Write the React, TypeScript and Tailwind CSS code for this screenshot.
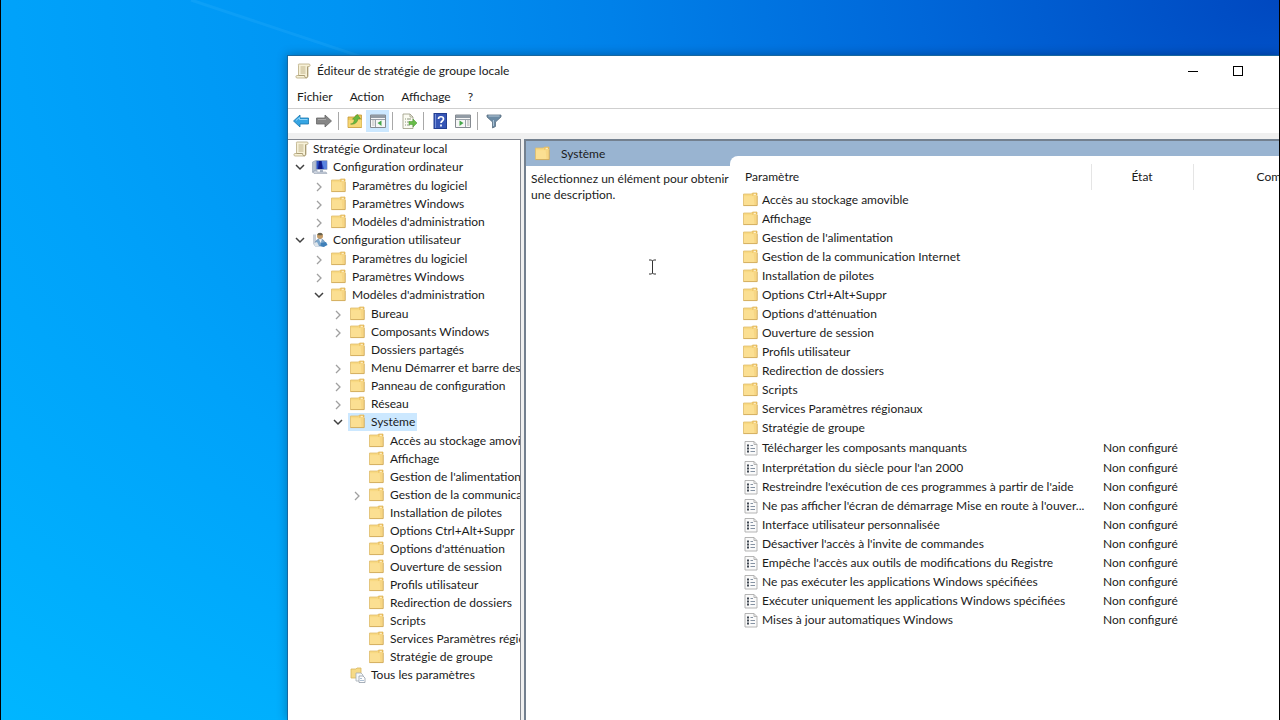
import type { ReactNode } from "react";

type TreeNode = {
  label: string;
  icon?: "computer" | "user" | "all";
  open?: boolean;
  closed?: boolean;
  selected?: boolean;
  children?: TreeNode[];
};

const systemFolders = [
  "Accès au stockage amovible",
  "Affichage",
  "Gestion de l'alimentation",
  "Gestion de la communication Internet",
  "Installation de pilotes",
  "Options Ctrl+Alt+Suppr",
  "Options d'atténuation",
  "Ouverture de session",
  "Profils utilisateur",
  "Redirection de dossiers",
  "Scripts",
  "Services Paramètres régionaux",
  "Stratégie de groupe",
];

const settings = [
  "Télécharger les composants manquants",
  "Interprétation du siècle pour l'an 2000",
  "Restreindre l'exécution de ces programmes à partir de l'aide",
  "Ne pas afficher l'écran de démarrage Mise en route à l'ouver...",
  "Interface utilisateur personnalisée",
  "Désactiver l'accès à l'invite de commandes",
  "Empêche l'accès aux outils de modifications du Registre",
  "Ne pas exécuter les applications Windows spécifiées",
  "Exécuter uniquement les applications Windows spécifiées",
  "Mises à jour automatiques Windows",
];

const tree: TreeNode[] = [
  {
    label: "Configuration ordinateur",
    icon: "computer",
    open: true,
    children: [
      { label: "Paramètres du logiciel", closed: true },
      { label: "Paramètres Windows", closed: true },
      { label: "Modèles d'administration", closed: true },
    ],
  },
  {
    label: "Configuration utilisateur",
    icon: "user",
    open: true,
    children: [
      { label: "Paramètres du logiciel", closed: true },
      { label: "Paramètres Windows", closed: true },
      {
        label: "Modèles d'administration",
        open: true,
        children: [
          { label: "Bureau", closed: true },
          { label: "Composants Windows", closed: true },
          { label: "Dossiers partagés" },
          { label: "Menu Démarrer et barre des tâches", closed: true },
          { label: "Panneau de configuration", closed: true },
          { label: "Réseau", closed: true },
          {
            label: "Système",
            open: true,
            selected: true,
            children: systemFolders.map((label) => ({
              label,
              closed: label.includes("Internet"),
            })),
          },
          { label: "Tous les paramètres", icon: "all" },
        ],
      },
    ],
  },
];

function Icon({ children }: { children: ReactNode }) {
  return (
    <svg viewBox="0 0 16 16" className="h-4 w-4 shrink-0" fill="none" aria-hidden="true">
      {children}
    </svg>
  );
}

function FolderIcon() {
  return (
    <Icon>
      <path d="M.5 2h8l1-1H14v12.500H.5z" fill="#f8d982" stroke="#dfbd6c" strokeWidth=".8" />
      <path d="M9.500 1.200H14v2.600H9.500z" fill="#e5b755" />
      <path d="M10.500 1.800h2.400v1.100h-2.400z" fill="#fff3cf" />
      <path d="M1 4.200h8.500l1-1h3.200V13H1z" fill="#fbdf92" />
      <path d="M10.500 3.500h3.200V13h-2.200z" fill="#f7d684" />
      <path d="M.5 13.600h13.700V4" stroke="#cfa95a" strokeWidth=".8" />
    </Icon>
  );
}

function ScrollIcon() {
  return (
    <Icon>
      <path d="M4 1h10c1.500 0 1.500 2.500 0 2.500h-1V13c0 1.500-1 2-2 2H2c-1.500 0-1.500-2.500 0-2.500h1.500V3C3.500 2 3 1 4 1z" fill="#f7f1d7" stroke="#b9ab82" strokeWidth=".8" />
      <path d="M12.500 3.500V13c0 1-.5 1.800-1.500 1.800S9.600 13.500 9.600 12.500H3.500" stroke="#a2946c" strokeWidth=".9" />
      <path d="M5.500 4h5M5.500 6h5M5.500 8h5M5.500 10h5" stroke="#b4a678" strokeWidth=".8" />
    </Icon>
  );
}

function ComputerIcon() {
  return (
    <Icon>
      <path d="M.5 3l3-1.500v10l-3 2z" fill="#b5c0ce" stroke="#8593a6" strokeWidth=".5" />
      <path d="M4 1.500h11v9H4z" fill="#2a50c4" stroke="#a7b3c9" />
      <path d="M9.500 2h5v8H12z" fill="#5a84e0" />
      <path d="M7 2h2.500l1 8H6z" fill="#101a86" />
      <path d="M8 11h3v2H8z" fill="#a7b3c4" />
      <path d="M1 12.500l4-1.500v2h9l1 1.500H2z" fill="#cbd3df" stroke="#8793a5" strokeWidth=".5" />
    </Icon>
  );
}

function UserIcon() {
  return (
    <Icon>
      <path d="M1 2.500h3v10H1z" fill="#c7ced8" />
      <circle cx="8" cy="4" r="3" fill="#c69c66" />
      <path d="M5.300 3c.5-3 5-3 5.400 0-2 .3-3 .2-5.400 0z" fill="#66614e" />
      <path d="M3 14c-.5-5 2-7 5-7s5 2 5 5v2z" fill="#7da7cb" stroke="#5b82a8" strokeWidth=".6" />
      <path d="M7 7l1.500 4L10 7.200z" fill="#f3f5f7" />
      <path d="M9 11l5-1 1.500 3-4 2-3-1z" fill="#3f80b9" />
      <path d="M2 11l3-1 2 4H3z" fill="#dfe5ea" />
    </Icon>
  );
}

function AllSettingsIcon() {
  return (
    <Icon>
      <path d="M1 2h5l1-1h4v10H1z" fill="#f6da88" stroke="#d9b65e" strokeWidth=".8" />
      <path d="M6 6h5l2 2v6H6z" fill="#f6f8fa" stroke="#a5adb5" strokeWidth=".8" />
      <path d="M9 9h4l2 2v4.500H9z" fill="#fff" stroke="#929ca8" strokeWidth=".8" />
      <path d="M10.500 11.500h1M10.500 13.500h1M12.500 13.500h1" stroke="#5d83ab" />
    </Icon>
  );
}

function SettingIcon() {
  return (
    <Icon>
      <path d="M2 1.500h9L14 4.500v10.500H2z" fill="#fafafa" stroke="#adadad" strokeWidth=".9" />
      <path d="M11 1.500v3h3" stroke="#adadad" strokeWidth=".9" />
      <path d="M4 4.500h2v2H4zM4 7.500h2v2H4zM4 10.500h2v2H4z" fill="#3f4650" />
      <path d="M7.500 5.500H10M7.500 8.500H12M7.500 11.500H12" stroke="#8693a3" />
    </Icon>
  );
}

function Chevron({ open }: { open?: boolean }) {
  return (
    <svg viewBox="0 0 14 14" className="h-[14px] w-[14px]" fill="none" aria-hidden="true">
      {open ? (
        <path d="M3 5l4 4 4-4" stroke="#404040" strokeWidth="1.5" />
      ) : (
        <path d="M5 4l4 4-4 4" stroke="#a0a0a0" strokeWidth="1.3" />
      )}
    </svg>
  );
}

function NodeIcon({ icon }: { icon?: TreeNode["icon"] }) {
  if (icon === "computer") return <ComputerIcon />;
  if (icon === "user") return <UserIcon />;
  if (icon === "all") return <AllSettingsIcon />;
  return <FolderIcon />;
}

function Branch({ nodes, nested }: { nodes: TreeNode[]; nested?: boolean }) {
  return (
    <ul className={nested ? "pt-px pl-[19px]" : ""}>
      {nodes.map((node) => (
        <li key={node.label}>
          <div className="flex h-[18px] items-center whitespace-nowrap">
            <button type="button" className="mr-[3px] w-[14px] shrink-0" aria-label={node.label}>
              {(node.open || node.closed) && <Chevron open={node.open} />}
            </button>
            <span className={`flex h-[18px] items-center gap-[5px] px-[2px] ${node.selected ? "bg-[#cce8ff]" : ""}`}>
              <NodeIcon icon={node.icon} />
              {node.label}
            </span>
          </div>
          {node.children && <Branch nodes={node.children} nested />}
        </li>
      ))}
    </ul>
  );
}

function ToolButton({ label, active, children }: { label: string; active?: boolean; children: ReactNode }) {
  return (
    <button
      type="button"
      aria-label={label}
      className={`flex h-[22px] w-[23px] items-center justify-center ${active ? "bg-[#cce8ff]" : ""}`}
    >
      <svg viewBox="0 0 16 16" className="h-4 w-4" fill="none">
        {children}
      </svg>
    </button>
  );
}

function Divider() {
  return <div className="mr-[4px] ml-[3px] h-[18px] w-px bg-[#a8a8a8]" />;
}

function Toolbar() {
  return (
    <div className="flex h-[24px] shrink-0 items-center pl-px">
      <ToolButton label="Précédent">
        <path d="M.5 8l6.500-6v3h8.500v6H7v3z" fill="#36a5e3" stroke="#1976af" strokeWidth=".8" />
        <path d="M3 7.500l3.500-3v2h8" stroke="#8ed3f8" />
      </ToolButton>
      <ToolButton label="Suivant">
        <path d="M15.500 8L9 2v3H.5v6H9v3z" fill="#868686" stroke="#666" strokeWidth=".8" />
        <path d="M2 6.500h8" stroke="#aaa" />
      </ToolButton>
      <Divider />
      <ToolButton label="Dossier parent">
        <path d="M1 4h7l1-2h5.500v12.500H1z" fill="#edc75e" stroke="#c79a36" strokeWidth=".8" />
        <path d="M1.500 7h13v7h-13z" fill="#f6d875" />
        <path d="M3.500 11c2.500 0 3.500-2 4-4.500L5.500 6l5-4.500 3 4.500-2.500-.2C10.500 9 8 12 3.500 11z" fill="#68b83e" stroke="#478c29" strokeWidth=".5" />
      </ToolButton>
      <ToolButton label="Arborescence de la console" active>
        <path d="M.5 2h15v12.500H.5z" fill="#f6f6f6" stroke="#858a90" />
        <path d="M1 2h14v3H1z" fill="#929ba4" />
        <path d="M1 6.500h14M5.500 7v7" stroke="#9ba2aa" />
        <path d="M2 8h2.500M2 10h2.500M2 12h2.500" stroke="#bbb" />
        <path d="M11.500 7.500v5.500L7.500 10z" fill="#45a64a" />
      </ToolButton>
      <Divider />
      <ToolButton label="Exporter la liste">
        <path d="M2 1h7l3 3v11.500H2z" fill="#fbfbf2" stroke="#999982" strokeWidth=".8" />
        <path d="M9 1v3h3" stroke="#999982" strokeWidth=".8" />
        <path d="M4 6h1M6 6h4M4 9h1M6 9h3M4 12h1M6 12h3" stroke="#8c967e" />
        <path d="M8 8.500h4V6l4 4-4 4v-2.500H8z" fill="#69bd49" stroke="#44972f" strokeWidth=".5" />
      </ToolButton>
      <Divider />
      <ToolButton label="Aide">
        <rect x="2" y=".5" width="12.5" height="15" fill="#3555b5" stroke="#233e91" />
        <path d="M3.500 1v14" stroke="#7690d9" />
        <path d="M6.500 6c0-3 5-3 5 0 0 2-2.500 2-2.500 4M9 11.500v2" stroke="#fff" strokeWidth="1.7" />
      </ToolButton>
      <ToolButton label="Volet Actions">
        <path d="M.5 2h15v12.500H.5z" fill="#f6f6f6" stroke="#858a90" />
        <path d="M1 2h14v3H1z" fill="#929ba4" />
        <path d="M1 6.500h14M10.500 7v7" stroke="#9ba2aa" />
        <path d="M12 8h2.500M12 10h2.500M12 12h2.500" stroke="#aaa" />
        <path d="M4.500 7.500v5.500l4-3z" fill="#45a64a" />
      </ToolButton>
      <Divider />
      <ToolButton label="Filtrer">
        <path d="M1 2h14v2L9.500 9v4.500L6.500 15V9L1 4z" fill="#6c8ba5" stroke="#5a7082" strokeWidth=".8" />
        <path d="M2.500 3h11" stroke="#b6c9d8" />
        <path d="M7.500 7v6" stroke="#a9c3d6" />
      </ToolButton>
    </div>
  );
}

function SettingsTable() {
  return (
    <table className="w-[686px] table-fixed border-collapse text-left whitespace-nowrap">
      <colgroup>
        <col className="w-[361px]" />
        <col className="w-[102px]" />
        <col className="w-[223px]" />
      </colgroup>
      <thead>
        <tr className="h-[26px]">
          <th className="border-r border-[#e5e5e5] pl-[15px] font-normal">Paramètre</th>
          <th className="border-r border-[#e5e5e5] text-center font-normal">État</th>
          <th className="pl-[63px] font-normal">Commentaire</th>
        </tr>
      </thead>
      <tbody>
        {systemFolders.map((name) => (
          <tr key={name} className="h-[19px]">
            <td className="p-0 pl-[13px]">
              <div className="flex h-[19px] items-center gap-[3px]">
                <FolderIcon />
                {name}
              </div>
            </td>
            <td />
            <td />
          </tr>
        ))}
      </tbody>
      <tbody>
        {settings.map((name) => (
          <tr key={name} className="h-[19px] first:h-[21px]">
            <td className="p-0 pl-[13px]">
              <div className="flex h-[19px] items-center gap-[3px]">
                <SettingIcon />
                {name}
              </div>
            </td>
            <td className="p-0 pl-[12px]">Non configuré</td>
            <td />
          </tr>
        ))}
      </tbody>
    </table>
  );
}

export default function App() {
  return (
    <div className="relative flex h-screen overflow-hidden border-x border-black bg-[radial-gradient(ellipse_at_100%_0%,#0048c0_0%,#0067d9_20%,#0081e9_37%,#0094f3_52%,#00a2fa_70%,#00b6ff_100%)] pt-[55px] pl-[286px] font-[Lato,sans-serif] text-[12px] leading-[16px] text-[#1b1b1b]">
      <svg viewBox="0 0 400 60" className="absolute top-0 left-0 h-[60px] w-[400px]" fill="none" aria-hidden="true">
        <path d="M190 0l180 60" stroke="#4fc0ff" strokeOpacity=".15" strokeWidth="3" />
      </svg>
      <main className="relative flex min-w-0 flex-1 flex-col border-t border-l border-[#18679f] bg-white shadow-[0_0_10px_rgba(0,0,0,0.3)]">
        <header className="flex h-[30px] shrink-0 items-center pl-[7px]">
          <ScrollIcon />
          <h1 className="ml-[6px] flex-1">Éditeur de stratégie de groupe locale</h1>
          <button type="button" aria-label="Réduire" className="flex h-[30px] w-[45px] items-center justify-center">
            <span className="h-px w-[10px] bg-black" />
          </button>
          <button type="button" aria-label="Agrandir" className="mr-[19px] flex h-[30px] w-[45px] items-center justify-center">
            <span className="h-[10px] w-[10px] border border-black" />
          </button>
        </header>
        <nav className="flex h-[23px] shrink-0 items-center gap-[17px] border-b border-[#cfcfcf] pl-[9px]">
          <button type="button">Fichier</button>
          <button type="button">Action</button>
          <button type="button">Affichage</button>
          <button type="button">?</button>
        </nav>
        <Toolbar />
        <div className="flex min-h-0 flex-1 bg-[#f0f0f0] pt-[6px]">
          <aside className="w-[233px] shrink-0 overflow-hidden border-t border-r border-[#828790] bg-white pl-[5px]">
            <div className="flex h-[18px] items-center gap-[4px]">
              <ScrollIcon />
              Stratégie Ordinateur local
            </div>
            <Branch nodes={tree} />
          </aside>
          <section className="ml-[3px] flex min-w-0 flex-1 flex-col overflow-hidden border-t-2 border-l-2 border-[#73808f] bg-[#99b4d1]">
            <div className="flex min-h-0 flex-1">
              <div className="flex w-[204px] shrink-0 flex-col">
                <h2 className="flex h-[25px] items-center gap-[10px] pl-[9px]">
                  <FolderIcon />
                  Système
                </h2>
                <p className="flex-1 bg-white pt-[5px] pl-[5px]">
                  Sélectionnez un élément pour obtenir une description.
                </p>
              </div>
              <div className="mt-[15px] min-w-0 flex-1 overflow-hidden rounded-tl-[8px] bg-white pt-[8px]">
                <SettingsTable />
              </div>
            </div>
          </section>
        </div>
      </main>
      <svg viewBox="0 0 9 16" className="absolute top-[259px] left-[647px] h-4 w-[9px]" fill="none" aria-hidden="true">
        <path d="M1 1h2.500l1 1 1-1H8M4.500 2v12M1 15h2.500l1-1 1 1H8" stroke="#333" />
      </svg>
    </div>
  );
}
